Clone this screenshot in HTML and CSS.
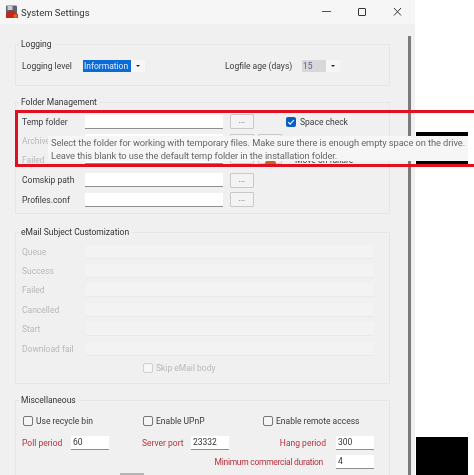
FILE: index.html
```html
<!DOCTYPE html>
<html lang="en">
<head>
<meta charset="utf-8">
<title>System Settings</title>
<link rel="stylesheet" href="styles.css">
</head>
<body>
<div class="stage">
  <div class="window">
    <header class="titlebar">
      <svg class="app-icon" viewBox="0 0 14 14" width="14" height="14" aria-hidden="true">
        <rect x="1" y="0.5" width="11" height="12.5" rx="1" fill="#5b6470"/>
        <rect x="2.5" y="1" width="5" height="4" fill="#c9ccd2"/>
        <path d="M1 8.5 5 5.5l4 .5 4 3.5V13H1z" fill="#c4281c"/>
        <circle cx="10.5" cy="11" r="2" fill="#e2661d"/>
      </svg>
      <span class="title">System Settings</span>
      <div class="controls">
        <svg class="ctl" viewBox="0 0 36 24" width="36" height="24"><path d="M20 11.5h9" stroke="#555" stroke-width="1"/></svg>
        <svg class="ctl" viewBox="0 0 36 24" width="36" height="24"><rect x="20.500" y="8.500" width="7" height="7" rx="0.5" fill="none" stroke="#333" stroke-width="1"/></svg>
        <svg class="ctl" viewBox="0 0 36 24" width="36" height="24"><path d="M20 8l7 7.500M27 8l-7 7.500" stroke="#333" stroke-width="1" fill="none"/></svg>
      </div>
    </header>
    <div class="body">
      <main class="content">
        <fieldset class="group group-logging">
          <legend>Logging</legend>
          <div class="row">
            <span class="lbl lbl-level">Logging level</span>
            <span class="combo combo-info"><span class="combo-value selected">Information</span><span class="combo-arrow"></span></span>
            <span class="lbl lbl-age">Logfile age (days)</span>
            <span class="combo combo-age"><span class="combo-value grey">15</span><span class="combo-arrow"></span></span>
          </div>
        </fieldset>

        <fieldset class="group group-folder">
          <legend>Folder Management</legend>
          <div class="row">
            <span class="lbl lbl-folder">Temp folder</span><span class="input input-folder"></span><span class="btn">...</span>
            <span class="check check-on"><svg viewBox="0 0 10 10" width="10" height="10"><path d="M2.200 5.200 4.200 7.200 7.900 3" fill="none" stroke="#fff" stroke-width="1.100"/></svg></span><span class="lbl">Space check</span>
          </div>
          <div class="row">
            <span class="lbl lbl-folder muted">Archive</span><span class="input input-folder"></span><span class="btn">...</span><span class="btn">...</span>
          </div>
          <div class="row row-failed">
            <span class="lbl lbl-folder muted">Failed</span><span class="input input-folder"></span><span class="btn">...</span><span class="btn btn-warn">...</span>
            <span class="lbl lbl-move">Move on failure</span>
          </div>
          <div class="row row-after">
            <span class="lbl lbl-folder">Comskip path</span><span class="input input-folder"></span><span class="btn">...</span>
          </div>
          <div class="row">
            <span class="lbl lbl-folder">Profiles.conf</span><span class="input input-folder"></span><span class="btn">...</span>
          </div>
        </fieldset>

        <fieldset class="group group-email">
          <legend>eMail Subject Customization</legend>
          <div class="row"><span class="lbl lbl-email muted">Queue</span><span class="input input-email"></span></div>
          <div class="row"><span class="lbl lbl-email muted">Success</span><span class="input input-email"></span></div>
          <div class="row"><span class="lbl lbl-email muted">Failed</span><span class="input input-email"></span></div>
          <div class="row"><span class="lbl lbl-email muted">Cancelled</span><span class="input input-email"></span></div>
          <div class="row"><span class="lbl lbl-email muted">Start</span><span class="input input-email"></span></div>
          <div class="row"><span class="lbl lbl-email muted">Download fail</span><span class="input input-email"></span></div>
          <div class="row row-skip"><span class="check check-off check-disabled"></span><span class="lbl muted">Skip eMail body</span></div>
        </fieldset>

        <fieldset class="group group-misc">
          <legend>Miscellaneous</legend>
          <div class="row row-checks">
            <span class="opt"><span class="check check-off"></span><span class="lbl">Use recycle bin</span></span>
            <span class="opt"><span class="check check-off"></span><span class="lbl">Enable UPnP</span></span>
            <span class="opt"><span class="check check-off"></span><span class="lbl">Enable remote access</span></span>
          </div>
          <div class="row row-num">
            <span class="num-pair"><span class="lbl req lbl-num">Poll period</span><span class="input input-num">60</span></span>
            <span class="num-pair"><span class="lbl req lbl-num">Server port</span><span class="input input-num">23332</span></span>
            <span class="num-end"><span class="lbl req">Hang period</span><span class="input input-num">300</span></span>
          </div>
          <div class="row row-num">
            <span class="num-end num-full"><span class="lbl req lbl-min">Minimum commercial duration</span><span class="input input-num">4</span></span>
          </div>
        </fieldset>
      </main>
      <div class="vscroll"></div>
    </div>
    <div class="hthumb"></div>
  </div>
  <div class="black black-top"></div>
  <div class="black black-bottom"></div>
  <div class="tooltip">Select the folder for working with temporary files. Make sure there is enough empty space on the drive.<br>Leave this blank to use the default temp folder in the installation folder.</div>
  <div class="highlight"></div>
</div>
</body>
</html>
```

FILE: styles.css
```css
* { box-sizing: border-box; }
html, body { margin: 0; padding: 0; background: #fff; }
body { font-family: Roboto, "Open Sans", "Liberation Sans", sans-serif; color: #333; }

.stage { position: relative; width: 474px; height: 475px; overflow: hidden; background: #fff; filter: blur(0.3px); }
.window { position: relative; width: 415px; height: 475px; background: #f0f0f0; overflow: hidden; }

.titlebar { display: flex; align-items: center; height: 24px; padding-left: 5px; background: #f6f6f6; }
.app-icon { flex: none; }
.title { margin-left: 2px; font-size: 9.5px; color: #333; }
.controls { display: flex; margin-left: auto; margin-right: 5px; }
.ctl { display: block; }

.body { display: flex; }
.content { width: 408px; padding: 14px 0 0 15px; }
.vscroll { width: 3px; height: 439px; margin-top: 12px; background: #7b7b7b; }

.group { display: block; width: 375px; margin: 0; padding: 0 15px 0 6px; border: 1px solid #e6e6e6; min-width: 0; }
.group legend { height: 12px; padding: 0 3px 0 2px; margin-left: -3px; font-size: 8.5px; line-height: 12px; color: #333; }

.group-logging { height: 48px; padding-top: 6px; }
.group-folder { height: 118px; margin-top: 10px; padding-top: 4px; }
.group-email { height: 158px; margin-top: 12px; padding-top: 4px; }
.group-misc { height: 95px; margin-top: 10px; padding-top: 2px; }

.row { display: flex; align-items: center; height: 19.4px; }
.row-after { margin-top: 0.6px; }
.row-failed .input, .row-failed .btn { height: 12px; margin-bottom: 4px; }

.lbl { font-size: 8.5px; line-height: 12px; white-space: nowrap; color: #3a3a3a; }
.muted { color: #b9b9b9; }
.req { color: #b8303a; }
.lbl-level { width: 61px; }
.lbl-age { margin-left: 80px; width: 77px; }
.lbl-folder { width: 63px; }
.lbl-email { width: 65px; }
.lbl-move { margin-left: 13px; }

.combo { display: flex; height: 12px; }
.combo-value { display: block; font-size: 8.5px; line-height: 12px; padding-left: 1px; }
.combo-arrow { position: relative; display: block; width: 14px; background: #f6f6f6; }
.combo-arrow::after { content: ""; position: absolute; left: 5px; top: 5px; border: 2px solid transparent; border-top: 2px solid #222; border-bottom: 0; }
.combo-info .combo-value { width: 48px; }
.combo-age .combo-value { width: 24px; }
.selected { background: #0a6bd6; color: #dcecff; }
.grey { background: #d8d8d8; color: #5b55a8; }

.input { display: block; flex: none; height: 14px; background: #fff; border-bottom: 1px solid #8f8f8f; font-size: 8.5px; line-height: 13px; padding-left: 2px; color: #333; }
.input-folder { width: 138px; }
.input-email { width: 288px; background: #f3f3f3; border-bottom-color: #e9e9e9; }
.input-num { width: 38px; }

.btn { position: relative; display: block; flex: none; width: 24px; height: 15px; margin-left: 7px; background: #f3f3f3; border: 1px solid #c9c9c9; border-radius: 1px; font-size: 8px; line-height: 12px; text-align: center; color: #555; }
.btn + .btn { margin-left: 4px; }
.btn-warn::after { content: ""; position: absolute; left: 6px; bottom: -2px; width: 11px; height: 4px; background: #c8611c; border-radius: 2px; }

.check { display: block; flex: none; width: 10px; height: 10px; margin-right: 3px; border-radius: 2px; }
.check-on { margin-left: 32px; margin-right: 4px; background: #0a5cc2; }
.check-on svg { display: block; }
.check-off { border: 1px solid #777; background: #f6f6f6; }
.check-disabled { border-color: #cfcfcf; }

.row-skip { padding-left: 121px; }
.row-checks { height: 25.4px; padding-left: 1px; }
.opt { display: flex; flex: none; align-items: center; width: 120px; }
.num-pair { display: flex; flex: none; align-items: center; width: 120px; }
.lbl-num { width: 49px; }
.num-end { display: flex; align-items: center; margin-left: auto; }
.num-end .lbl { margin-right: 10px; }
.num-end .lbl-min { margin-right: 13px; letter-spacing: -0.28px; }

.hthumb { position: absolute; left: 120px; bottom: 0; width: 24px; height: 2px; background: #b5b5b5; }

.black { position: absolute; left: 416px; width: 52px; background: #000; }
.black-top { top: 132px; height: 32px; }
.black-bottom { top: 437px; height: 38px; }

.tooltip { position: absolute; left: 48px; top: 136px; width: 420px; height: 25px; padding: 1px 0 0 3px; background: #f6f6f6; font-size: 9.3px; letter-spacing: -0.08px; line-height: 12.500px; color: #666; white-space: nowrap; }

.highlight { position: absolute; left: 15px; top: 110px; width: 459px; height: 57px; border: 3px solid #e01020; border-right: 0; }
```
